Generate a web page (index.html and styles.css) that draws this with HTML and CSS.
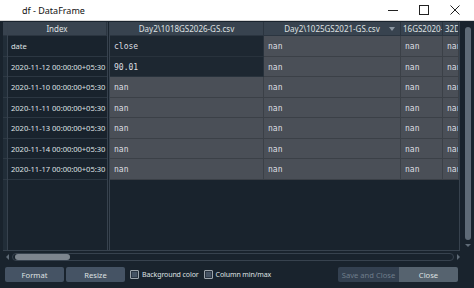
FILE: index.html
```html
<!DOCTYPE html>
<html>
<head>
<meta charset="utf-8">
<link rel="stylesheet" href="styles.css">
</head>
<body>
<div class="titlebar">
  <span class="title">df - DataFrame</span>
  <div class="controls">
    <svg class="ctl" width="10" height="10" viewBox="0 0 10 10"><path d="M0 5.5H10" stroke="#222" stroke-width="1"/></svg>
    <svg class="ctl" width="10" height="10" viewBox="0 0 10 10"><rect x="0.5" y="0.5" width="9" height="9" fill="none" stroke="#222" stroke-width="1"/></svg>
    <svg class="ctl" width="10" height="10" viewBox="0 0 10 10"><path d="M0.5 0.5L9.5 9.5M9.5 0.5L0.5 9.5" stroke="#222" stroke-width="1"/></svg>
  </div>
</div>
<div class="window">
  <div class="tablearea">
    <div class="frame">
      <div class="vhead">
        <div class="corner"></div>
        <div class="vrow"></div><div class="vrow"></div><div class="vrow"></div><div class="vrow"></div><div class="vrow"></div><div class="vrow"></div><div class="vrow"></div>
      </div>
      <div class="index">
        <div class="hcell">Index</div>
        <div class="icell">date</div>
        <div class="icell">2020-11-12 00:00:00+05:30</div>
        <div class="icell">2020-11-10 00:00:00+05:30</div>
        <div class="icell">2020-11-11 00:00:00+05:30</div>
        <div class="icell">2020-11-13 00:00:00+05:30</div>
        <div class="icell">2020-11-14 00:00:00+05:30</div>
        <div class="icell">2020-11-17 00:00:00+05:30</div>
      </div>
      <div class="split"></div>
      <div class="data">
        <div class="col c1">
          <div class="hcell">Day2\1018GS2026-GS.csv</div>
          <div class="dcell dark">close</div>
          <div class="dcell dark">90.01</div>
          <div class="dcell">nan</div><div class="dcell">nan</div><div class="dcell">nan</div><div class="dcell">nan</div><div class="dcell">nan</div>
        </div>
        <div class="col c2">
          <div class="hcell">Day2\1025GS2021-GS.csv<span class="arrow"></span></div>
          <div class="dcell">nan</div><div class="dcell">nan</div><div class="dcell">nan</div><div class="dcell">nan</div><div class="dcell">nan</div><div class="dcell">nan</div><div class="dcell">nan</div>
        </div>
        <div class="col c3">
          <div class="hcell left">16GS2020-</div>
          <div class="dcell">nan</div><div class="dcell">nan</div><div class="dcell">nan</div><div class="dcell">nan</div><div class="dcell">nan</div><div class="dcell">nan</div><div class="dcell">nan</div>
        </div>
        <div class="col c4">
          <div class="hcell left">32D</div>
          <div class="dcell">nan</div><div class="dcell">nan</div><div class="dcell">nan</div><div class="dcell">nan</div><div class="dcell">nan</div><div class="dcell">nan</div><div class="dcell">nan</div>
        </div>
      </div>
    </div>
    <div class="vscroll">
      <div class="vhandle"></div>
      <div class="varrow"></div>
    </div>
  </div>
  <div class="hscrollrow">
    <span class="larrow"></span>
    <div class="htrack"><div class="hhandle"></div></div>
    <span class="rarrow"></span>
  </div>
  <div class="buttons">
    <button class="btn">Format</button>
    <button class="btn">Resize</button>
    <label class="check"><span class="box"></span>Background color</label>
    <label class="check"><span class="box"></span>Column min/max</label>
    <div class="spacer"></div>
    <button class="btn disabled">Save and Close</button>
    <button class="btn light">Close</button>
  </div>
</div>
</body>
</html>
```
FILE: styles.css
```css
* { box-sizing: border-box; }
html, body { margin: 0; padding: 0; }
body {
  width: 474px;
  height: 288px;
  overflow: hidden;
  font-family: "Noto Sans", "Open Sans", sans-serif;
  background: #19232d;
}
.titlebar {
  height: 21px;
  background: #ffffff;
  display: flex;
  align-items: center;
  padding-left: 22px;
  border-bottom: 1px solid #d6d6d6;
}
.title {
  font-size: 9px;
  color: #111;
  flex: 1;
}
.controls {
  display: flex;
  gap: 21px;
  padding-right: 14px;
  align-items: center;
}
.ctl { display: block; }
.window {
  height: 267px;
  background: #19232d;
  display: flex;
  flex-direction: column;
}
.tablearea {
  height: 229px;
  display: flex;
  padding-left: 3px;
  padding-top: 1px;
}
.frame {
  flex: 1;
  display: flex;
  border-bottom: 1px solid #37424e;
  border-right: 1px solid #37424e;
  height: 229px;
}
.vhead {
  width: 5px;
  display: flex;
  flex-direction: column;
  background: #212d38;
  border-right: 1px solid #37424e;
}
.corner { height: 14px; background: #38434f; border-bottom: 1px solid #2b3540; }
.vrow { height: 20.5px; border-bottom: 1px solid #2e3944; }
.index {
  width: 100px;
  display: flex;
  flex-direction: column;
  border-right: 1px solid #37424e;
}
.hcell {
  height: 14px;
  background: #38434f;
  color: #dfe1e2;
  font-size: 8px;
  line-height: 14px;
  text-align: center;
  white-space: nowrap;
  overflow: hidden;
  border-right: 1px solid #2b3540;
  border-bottom: 1px solid #2b3540;
  position: relative;
}
.hcell.left { text-align: left; padding-left: 2px; }
.icell {
  height: 20.5px;
  line-height: 21px;
  font-size: 7.6px;
  color: #dfe1e2;
  padding-left: 3px;
  border-bottom: 1px solid #2c3742;
  background: #19232d;
  white-space: nowrap;
  letter-spacing: -0.05px;
}
.split { width: 2px; background: #19232d; border-right: 1px solid #37424e; }
.data {
  flex: 1;
  display: flex;
  overflow: hidden;
}
.col { display: flex; flex-direction: column; flex: none; }
.c1 { width: 154px; }
.c2 { width: 137px; }
.c3 { width: 42px; }
.c4 { width: 16px; }
.dcell {
  height: 20.5px;
  line-height: 21px;
  background: #4a4f57;
  color: #dcdee0;
  font-family: "DejaVu Sans Mono", "Liberation Mono", monospace;
  font-size: 8px;
  padding-left: 4px;
  border-bottom: 1px solid #3b4047;
  border-right: 1px solid #3b4047;
  white-space: nowrap;
  overflow: hidden;
}
.dcell.dark { background: #1d2731; border-bottom-color: #28323c; border-right-color: #28323c; }
.arrow {
  position: absolute;
  right: 5px;
  top: 5px;
  width: 0; height: 0;
  border-left: 3px solid transparent;
  border-right: 3px solid transparent;
  border-top: 4px solid #8b96a1;
}
.vscroll {
  width: 15px;
  position: relative;
  padding: 5px 0 0 3px;
}
.vhandle {
  width: 6px;
  height: 213px;
  margin-left: 2px;
  border-radius: 3px;
  background: #5f6b77;
}
.varrow {
  position: absolute;
  left: 5px;
  top: 222px;
  width: 0; height: 0;
  border-left: 3px solid transparent;
  border-right: 3px solid transparent;
  border-top: 3px solid #5f6b77;
}
.hscrollrow {
  height: 14px;
  display: flex;
  align-items: center;
  padding: 0 14px 0 6px;
  gap: 3px;
}
.larrow, .rarrow { width: 0; height: 0; border-top: 3px solid transparent; border-bottom: 3px solid transparent; }
.larrow { border-right: 3px solid #5f6b77; }
.rarrow { border-left: 3px solid #5f6b77; }
.htrack {
  flex: 1;
  height: 8px;
  border: 1px solid #37424e;
  border-radius: 4px;
  padding: 0 0 0 2px;
}
.hhandle {
  width: 55px;
  height: 6px;
  border-radius: 3px;
  background: #7d858e;
}
.buttons {
  height: 20px;
  display: flex;
  align-items: center;
  padding: 1px 16px 0 5px;
  gap: 2px;
}
.btn {
  height: 15px;
  width: 59px;
  border: none;
  border-radius: 2px;
  background: #455364;
  color: #dfe1e2;
  font-family: "Noto Sans", sans-serif;
  font-size: 7.6px;
  padding: 0;
  margin: 0;
}
.btn.disabled { width: 61px; background: #334050; color: #6f7d8b; border-radius: 2px 0 0 2px; margin-right: -2px; }
.btn.light { background: #56636f; border-radius: 0 2px 2px 0; }
.check {
  display: flex;
  align-items: center;
  gap: 3px;
  font-size: 7px;
  letter-spacing: -0.1px;
  color: #dfe1e2;
  margin-left: 3px;
}
.box {
  width: 9px;
  height: 9px;
  border: 1px solid #9ca4ab;
  border-radius: 1px;
  background: #455364;
  box-shadow: inset 0 0 0 1px #2a3542;
}
.spacer { flex: 1; }
```
